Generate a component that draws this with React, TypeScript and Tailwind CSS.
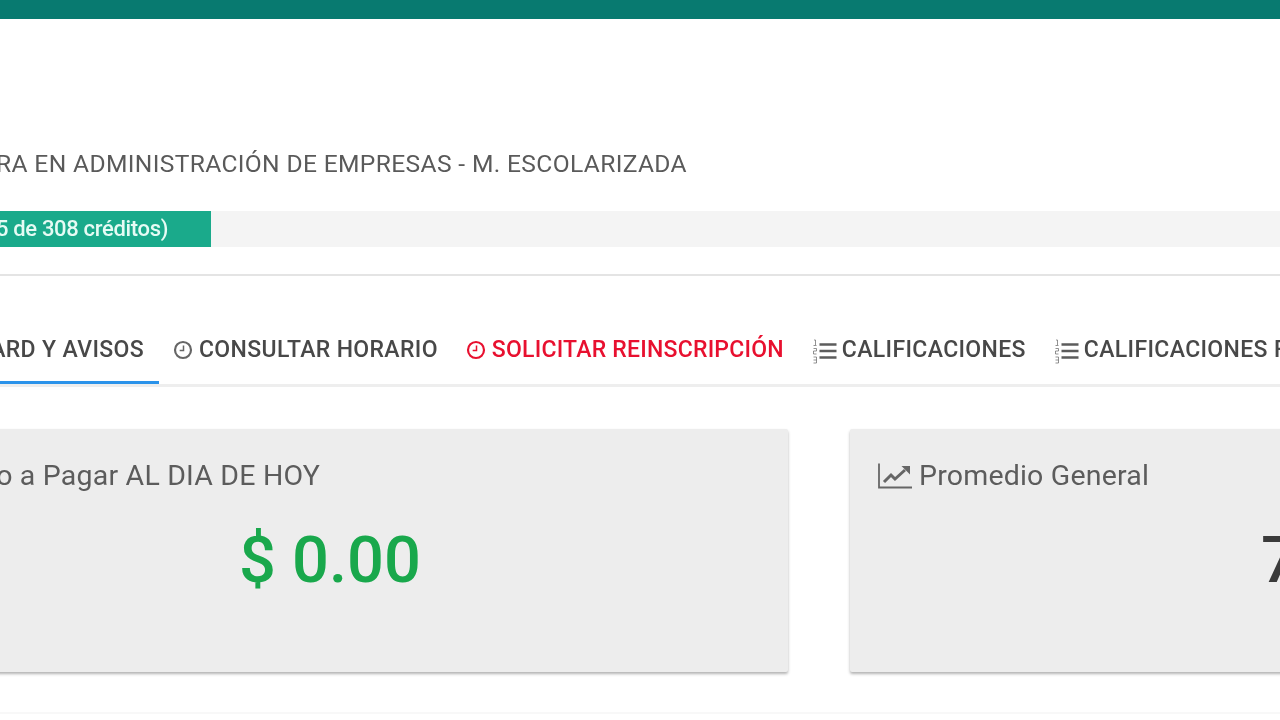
import type { ReactNode } from 'react';

function ClockIcon({ className }: { className: string }) {
  return (
    <svg viewBox="0 0 24 24" fill="none" stroke="currentColor" className={className}>
      <circle cx="12" cy="12" r="9.6" strokeWidth="2.6" />
      <path d="M12.6 6.5v6.2H8" strokeWidth="1.8" />
    </svg>
  );
}

function NumberedListIcon() {
  return (
    <svg viewBox="0 0 24 26" fill="none" stroke="currentColor" className="h-[26px] w-[24px] shrink-0 text-[#5c5c5c]">
      <path d="M6.500 6.500h17M6.500 13h17M6.500 19.500h17" strokeWidth="2.300" />
      <path d="M1 2h1.500v5M0.500 7.500h3M0.500 10.500h3v2.500h-3v3h3M0.500 19h3v3h-3M3.500 22v3h-3" strokeWidth="0.900" opacity="0.75" />
    </svg>
  );
}

function ChartIcon() {
  return (
    <svg viewBox="0 0 34 26" fill="none" stroke="currentColor" className="h-[26px] w-[34px] shrink-0">
      <path d="M1 0.500v24h33" strokeWidth="1.800" />
      <path d="M6 19l7-7 4 4 10-9" strokeWidth="3" />
      <path d="M23.500 3h8.500v8.500z" fill="currentColor" stroke="none" />
    </svg>
  );
}

function Tab({ children, className = '' }: { children: ReactNode; className?: string }) {
  return (
    <div className={`flex h-[67px] shrink-0 items-center whitespace-nowrap text-[23px] font-medium ${className}`}>
      {children}
    </div>
  );
}

export default function App() {
  return (
    <div className="h-[720px] w-[1280px] overflow-hidden bg-white font-['Roboto',sans-serif] blur-[0.6px]">
      <div className="h-[19px] bg-[#087a70]" />

      <div className="mt-[128px] -ml-[143px] whitespace-nowrap text-[24.6px] leading-[34px] tracking-[0.35px] text-[#5a5a5a]">
        LICENCIATURA EN ADMINISTRACIÓN DE EMPRESAS - M. ESCOLARIZADA
      </div>

      <div className="mt-[30px] flex h-[36px] bg-[#f4f4f4]">
        <div className="flex w-[211px] items-center justify-end overflow-hidden whitespace-nowrap bg-[#1aaa8b] pr-[43px] pb-[2px] text-[22px] font-medium tracking-[-0.33px] text-[#e6fbf4]">
          (125 de 308 créditos)
        </div>
      </div>

      <div className="mt-[27px] h-[2px] bg-[#e4e4e4]" />

      <div className="mt-[41px] flex border-b-[3px] border-[#eeeeee] text-[#484848]">
        <Tab className="-mb-[3px] w-[159px] justify-end border-b-[3px] border-[#2b93ea] pr-[15px] tracking-[0.35px]">
          <span className="mt-[3px]">DASHBOARD Y AVISOS</span>
        </Tab>
        <Tab className="ml-[14px] gap-[6px] tracking-[0.35px]">
          <ClockIcon className="-mt-[2px] h-[20px] w-[20px] shrink-0 text-[#666666]" />
          CONSULTAR HORARIO
        </Tab>
        <Tab className="ml-[28px] gap-[6px] tracking-[0.22px] text-[#e8102f]">
          <ClockIcon className="-mt-[2px] h-[20px] w-[20px] shrink-0" />
          SOLICITAR REINSCRIPCIÓN
        </Tab>
        <Tab className="ml-[29px] gap-[5px] tracking-[0.35px]">
          <NumberedListIcon />
          CALIFICACIONES
        </Tab>
        <Tab className="ml-[29px] gap-[5px] tracking-[0.35px]">
          <NumberedListIcon />
          CALIFICACIONES FINALES
        </Tab>
      </div>

      <div className="mt-[42px] flex gap-[62px]">
        <div className="-ml-[128px] h-[243px] w-[916px] shrink-0 rounded-[2px] bg-[#ededed] shadow-[0_2px_3px_rgba(0,0,0,0.3)]">
          <div className="flex justify-end pt-[28px] pr-[468px] text-[28.5px] leading-[38px] tracking-[0.2px] whitespace-nowrap text-[#5c5c5c]">
            Saldo a Pagar AL DIA DE HOY
          </div>
          <div className="mt-[25px] text-center text-[65px] leading-[80px] font-medium text-[#19a84c]">$ 0.00</div>
        </div>
        <div className="h-[243px] w-[916px] shrink-0 rounded-[2px] bg-[#ededed] pl-[28px] shadow-[0_2px_3px_rgba(0,0,0,0.3)]">
          <div className="flex items-center gap-[7px] pt-[28px] text-[28.5px] leading-[38px] tracking-[0.2px] whitespace-nowrap text-[#5c5c5c]">
            <span className="text-[#666666]">
              <ChartIcon />
            </span>
            Promedio General
          </div>
          <div className="mt-[25px] pl-[383px] text-[65px] leading-[80px] font-medium text-[#3a3a3a]">7</div>
        </div>
      </div>

      <div className="mt-[40px] h-[2px] bg-[#f8f8f8]" />
    </div>
  );
}
